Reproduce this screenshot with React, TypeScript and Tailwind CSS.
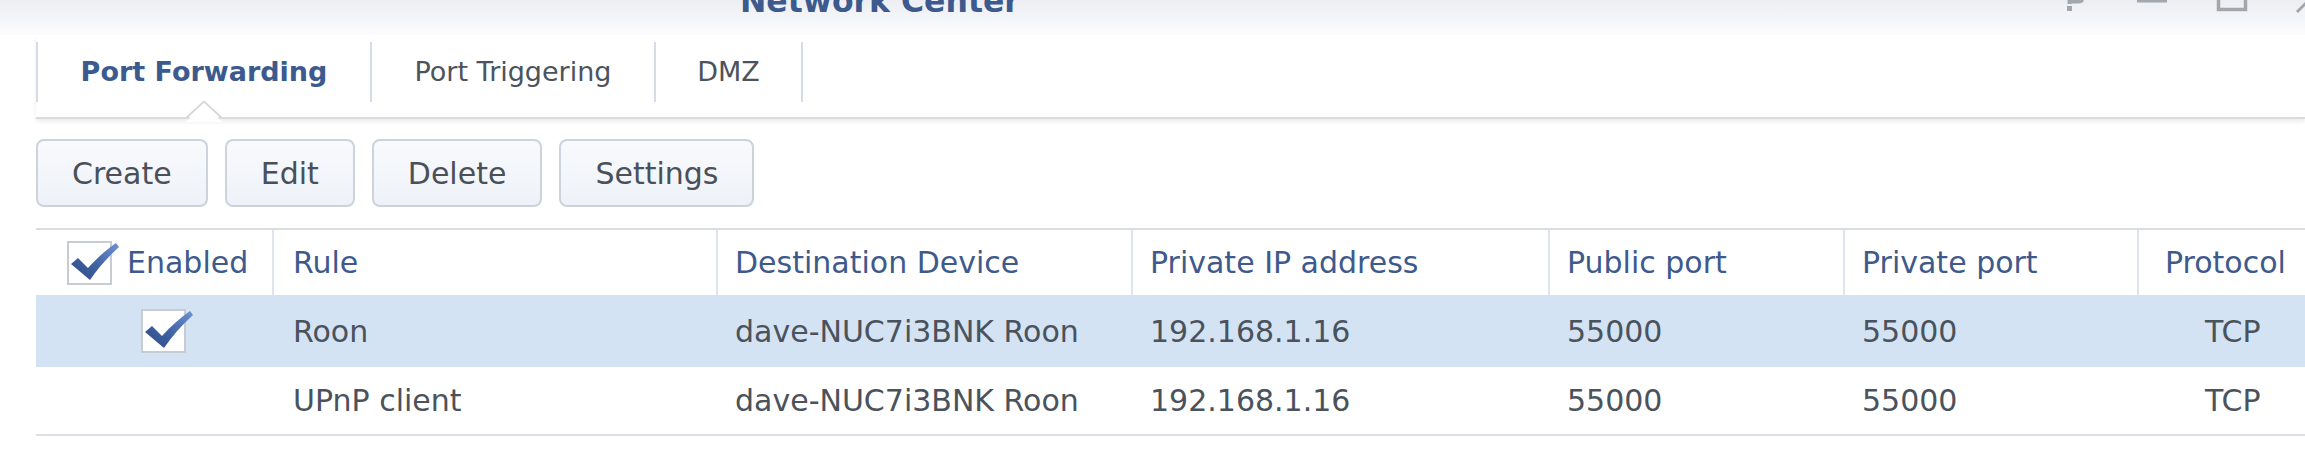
import React from "react";

function Check({ id }: { id: string }) {
  return (
    <svg width="45" height="44" viewBox="0 0 45 44" className="overflow-visible shrink-0">
      <defs>
        <linearGradient id={id} x1="1" y1="0" x2="0" y2="1">
          <stop offset="0" stopColor="#6f92d0" />
          <stop offset="0.55" stopColor="#3f61a2" />
          <stop offset="1" stopColor="#2d4a85" />
        </linearGradient>
      </defs>
      <rect x="1" y="1" width="43" height="42" fill="#ffffff" stroke="#c7cbd2" strokeWidth="2" />
      <path
        d="M4 23 L11 17 L21 27 C30 17 39 9 49 2 L52 6 C41 16 31 27 23 39 Z"
        fill={`url(#${id})`}
      />
    </svg>
  );
}

const cols = "grid grid-cols-[236px_444px_415px_417px_295px_294px_190px] w-max";

export default function App() {
  const rows = [
    { sel: true, rule: "Roon", dest: "dave-NUC7i3BNK Roon", ip: "192.168.1.16", pub: "55000", priv: "55000", proto: "TCP" },
    { sel: false, rule: "UPnP client", dest: "dave-NUC7i3BNK Roon", ip: "192.168.1.16", pub: "55000", priv: "55000", proto: "TCP" },
  ];
  return (
    <div className="w-[2305px] h-[455px] overflow-hidden bg-white font-['DejaVu_Sans',Verdana,sans-serif]">
      {/* title bar */}
      <div className="h-[35px] overflow-hidden flex bg-gradient-to-b from-[#eceef3] to-[#fcfcfd]">
        <div className="ml-[740px] -mt-[17px] text-[31.5px] leading-[36px] font-bold text-[#3c5a8e] whitespace-nowrap">
          Network Center
        </div>
        <svg className="ml-auto shrink-0" width="255" height="35" viewBox="0 0 255 35">
          <path d="M32 -8 L32 -1 Q32 1.5 28 1.5 L19.5 1.5 L19.5 4" fill="none" stroke="#a2a6ad" strokeWidth="4" />
          <rect x="17" y="6" width="5" height="5" fill="#a2a6ad" />
          <rect x="87" y="-1" width="30" height="3.5" fill="#a2a6ad" />
          <rect x="168.5" y="-20" width="27" height="29.5" fill="none" stroke="#a2a6ad" strokeWidth="3.5" />
          <path d="M247 12 L264 -5" stroke="#a2a6ad" strokeWidth="3" />
        </svg>
      </div>

      {/* tabs */}
      <div className="ml-[36px] h-[84px] pt-[7px] flex items-start border-b-2 border-[#d9dbdf] shadow-[0_3px_4px_rgba(0,0,0,0.07)]">
        <div className="relative w-[334px] h-[60px] flex items-center justify-center border-l-2 border-[#d6dce7] text-[27px] font-bold text-[#3c5a8e] whitespace-nowrap">
          Port Forwarding
          <svg
            className="absolute left-1/2 -translate-x-1/2 top-[58px]"
            width="36"
            height="23"
            viewBox="0 0 36 23"
          >
            <polygon points="0,22 18,2 36,22" fill="#ffffff" />
            <polyline points="0,18 18,1.5 36,18" fill="none" stroke="#d6d8dc" strokeWidth="2" />
          </svg>
        </div>
        <div className="w-[284px] h-[60px] flex items-center justify-center border-l-2 border-[#d6dce7] text-[27px] text-[#4b535d] whitespace-nowrap">
          Port Triggering
        </div>
        <div className="w-[149px] h-[60px] flex items-center justify-center border-x-2 border-[#d6dce7] text-[27px] text-[#4b535d] whitespace-nowrap">
          DMZ
        </div>
      </div>

      {/* toolbar */}
      <div className="ml-[36px] mt-[20px] flex gap-[17px]">
        {["Create", "Edit", "Delete", "Settings"].map((b) => (
          <div
            key={b}
            className="h-[68px] px-[34px] flex items-center border-2 border-[#cdd3dc] rounded-[8px] bg-gradient-to-b from-[#f8fafd] to-[#eef2f8] text-[30px] text-[#4b5058] whitespace-nowrap"
          >
            {b}
          </div>
        ))}
      </div>

      {/* table */}
      <div className="ml-[36px] mt-[21px] border-t-2 border-[#d9dce1]">
        <div className={`${cols} h-[65px] text-[30px] text-[#3e5a8d] whitespace-nowrap`}>
          <div className="flex items-center pl-[31px] gap-[15px]">
            <Check id="chk-h" />
            <span>Enabled</span>
          </div>
          <div className="flex items-center border-l-2 border-[#dfe4f0] pl-[19px]">Rule</div>
          <div className="flex items-center border-l-2 border-[#dfe4f0] pl-[17px]">Destination Device</div>
          <div className="flex items-center border-l-2 border-[#dfe4f0] pl-[17px]">Private IP address</div>
          <div className="flex items-center border-l-2 border-[#dfe4f0] pl-[17px]">Public port</div>
          <div className="flex items-center border-l-2 border-[#dfe4f0] pl-[17px]">Private port</div>
          <div className="flex items-center border-l-2 border-[#dfe4f0] pl-[26px]">Protocol</div>
        </div>
        {rows.map((r, i) => (
          <div
            key={i}
            className={`${cols} text-[30px] text-[#4a525c] whitespace-nowrap ${
              r.sel ? "h-[72px] bg-[#d3e3f4]" : "h-[69px] border-b-2 border-[#dcdfe3]"
            }`}
          >
            <div className="flex items-center pl-[105px]">{r.sel && <Check id={`chk-${i}`} />}</div>
            <div className="flex items-center border-l-2 border-transparent pl-[19px]">{r.rule}</div>
            <div className="flex items-center border-l-2 border-transparent pl-[17px]">{r.dest}</div>
            <div className="flex items-center border-l-2 border-transparent pl-[17px]">{r.ip}</div>
            <div className="flex items-center border-l-2 border-transparent pl-[17px]">{r.pub}</div>
            <div className="flex items-center border-l-2 border-transparent pl-[17px]">{r.priv}</div>
            <div className="flex items-center border-l-2 border-transparent pl-[66px]">{r.proto}</div>
          </div>
        ))}
      </div>
    </div>
  );
}
